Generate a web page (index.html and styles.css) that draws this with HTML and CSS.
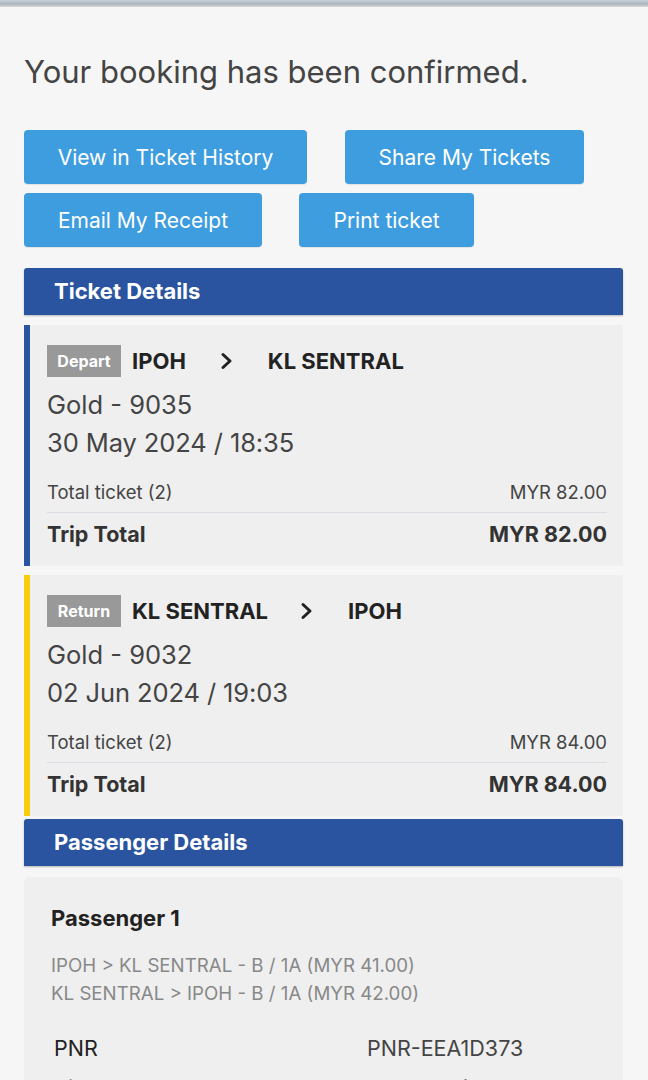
FILE: index.html
```html
<!DOCTYPE html>
<html>
<head>
<meta charset="utf-8">
<link rel="stylesheet" href="styles.css">
</head>
<body>
<div class="topbar"></div>
<main class="page">
  <h1 class="title">Your booking has been confirmed.</h1>
  <div class="actions">
    <div class="btn-row">
      <button class="btn btn-history">View in Ticket History</button>
      <button class="btn btn-share">Share My Tickets</button>
    </div>
    <div class="btn-row">
      <button class="btn btn-email">Email My Receipt</button>
      <button class="btn btn-print">Print ticket</button>
    </div>
  </div>

  <section class="panel">
    <div class="panel-head">Ticket Details</div>
    <div class="trip trip-depart">
      <div class="route">
        <span class="badge">Depart</span>
        <span class="station from">IPOH</span>
        <svg class="chev" width="14" height="18" viewBox="0 0 14 18"><path d="M3 2.5 L10 9 L3 15.5" fill="none" stroke="#222" stroke-width="3" stroke-linecap="round" stroke-linejoin="round"/></svg>
        <span class="station">KL SENTRAL</span>
      </div>
      <div class="train">Gold - 9035</div>
      <div class="when">30 May 2024 / 18:35</div>
      <div class="line-sub"><span>Total ticket (2)</span><span>MYR 82.00</span></div>
      <div class="line-total"><span>Trip Total</span><span>MYR 82.00</span></div>
    </div>
    <div class="trip trip-return">
      <div class="route">
        <span class="badge">Return</span>
        <span class="station from">KL SENTRAL</span>
        <svg class="chev" width="14" height="18" viewBox="0 0 14 18"><path d="M3 2.5 L10 9 L3 15.5" fill="none" stroke="#222" stroke-width="3" stroke-linecap="round" stroke-linejoin="round"/></svg>
        <span class="station">IPOH</span>
      </div>
      <div class="train">Gold - 9032</div>
      <div class="when">02 Jun 2024 / 19:03</div>
      <div class="line-sub"><span>Total ticket (2)</span><span>MYR 84.00</span></div>
      <div class="line-total"><span>Trip Total</span><span>MYR 84.00</span></div>
    </div>
  </section>

  <section class="panel panel-pax">
    <div class="panel-head">Passenger Details</div>
    <div class="pax-card">
      <div class="pax-name">Passenger 1</div>
      <div class="pax-seats">
        <div>IPOH &gt; KL SENTRAL - B / 1A (MYR 41.00)</div>
        <div>KL SENTRAL &gt; IPOH - B / 1A (MYR 42.00)</div>
      </div>
      <div class="pax-info">
        <div class="info-row"><span class="info-key">PNR</span><span class="info-val">PNR-EEA1D373</span></div>
        <div class="info-row"><span class="info-key">Ticket Type</span><span class="info-val">DEWASA/ADULT</span></div>
      </div>
    </div>
  </section>
</main>
</body>
</html>
```

FILE: styles.css
```css
* { box-sizing: border-box; }
html, body {
  margin: 0;
  padding: 0;
  background: #f6f6f6;
  font-family: Inter, Roboto, "Liberation Sans", Arial, sans-serif;
  color: #333;
  overflow: hidden;
  height: 1080px;
}
.topbar {
  height: 7px;
  background: linear-gradient(#c9d3d8 0%, #a9b6bf 55%, #d8d8d8 100%);
}
.page {
  padding: 0 25px 0 24px;
}
.title {
  margin: 45px 0 0 0;
  font-weight: 400;
  font-size: 31px;
  line-height: 40px;
  color: #444;
}
.actions {
  margin-top: 38px;
  display: flex;
  flex-direction: column;
  gap: 9px;
}
.btn-row {
  display: flex;
  gap: 38px;
}
.btn {
  height: 54px;
  border: none;
  border-radius: 4px;
  background: #3e9ddf;
  color: #fff;
  font-family: Inter, Roboto, "Liberation Sans", Arial, sans-serif;
  font-size: 21px;
  padding: 0;
  box-shadow: 0 1px 1px rgba(0,0,0,0.08);
}
.btn-history { width: 283px; }
.btn-share { width: 239px; }
.btn-email { width: 238px; }
.btn-print { width: 175px; margin-left: -1px; }

.panel { margin-top: 21px; }
.panel-pax { margin-top: 3px; }
.panel-head {
  height: 47px;
  background: #2a549f;
  color: #fff;
  font-weight: 700;
  font-size: 22px;
  line-height: 46px;
  padding-left: 30px;
  border-radius: 3px 3px 0 0;
  box-shadow: 0 1px 2px rgba(0,0,0,0.25);
}
.trip {
  margin-top: 10px;
  background: #efefef;
  border-left: 6px solid #2a549f;
  padding: 20px 16px 0 17px;
  height: 241px;
}
.trip + .trip { margin-top: 9px; }
.trip-return { border-left-color: #f7cd0c; }
.route {
  display: flex;
  align-items: center;
  height: 32px;
}
.badge {
  background: #999;
  color: #fff;
  font-weight: 700;
  font-size: 16px;
  height: 32px;
  line-height: 32px;
  width: 74px;
  text-align: center;
}
.station {
  font-weight: 700;
  font-size: 22px;
  color: #222;
}
.from { margin-left: 11px; }
.chev { margin: 0 34px 0 32px; }
.trip-depart .chev { margin-left: 34px; }
.train {
  margin-top: 11px;
  font-size: 25.5px;
  line-height: 34px;
  color: #444;
}
.when {
  margin-top: 4px;
  font-size: 25.5px;
  line-height: 34px;
  color: #444;
  letter-spacing: -0.1px;
}
.line-sub {
  margin-top: 20px;
  display: flex;
  justify-content: space-between;
  font-size: 18.5px;
  line-height: 24px;
  color: #444;
  padding-bottom: 8px;
  border-bottom: 1px solid #dcdce4;
}
.line-total {
  display: flex;
  justify-content: space-between;
  font-weight: 700;
  font-size: 21.5px;
  line-height: 42px;
  color: #333;
}
.pax-card {
  margin-top: 11px;
  background: #efefef;
  border-radius: 6px;
  padding: 27px 28px 20px 27px;
  height: 260px;
}
.pax-name {
  font-weight: 700;
  font-size: 22px;
  line-height: 28px;
  color: #222;
}
.pax-seats {
  margin-top: 20px;
  font-size: 18.7px;
  line-height: 28px;
  color: #888;
}
.pax-info {
  margin-top: 20px;
  padding-left: 3px;
}
.info-row {
  display: flex;
  font-size: 21.5px;
  line-height: 40px;
  color: #333;
}
.info-key { width: 313px; color: #222; }
.info-val { color: #444; }
```
